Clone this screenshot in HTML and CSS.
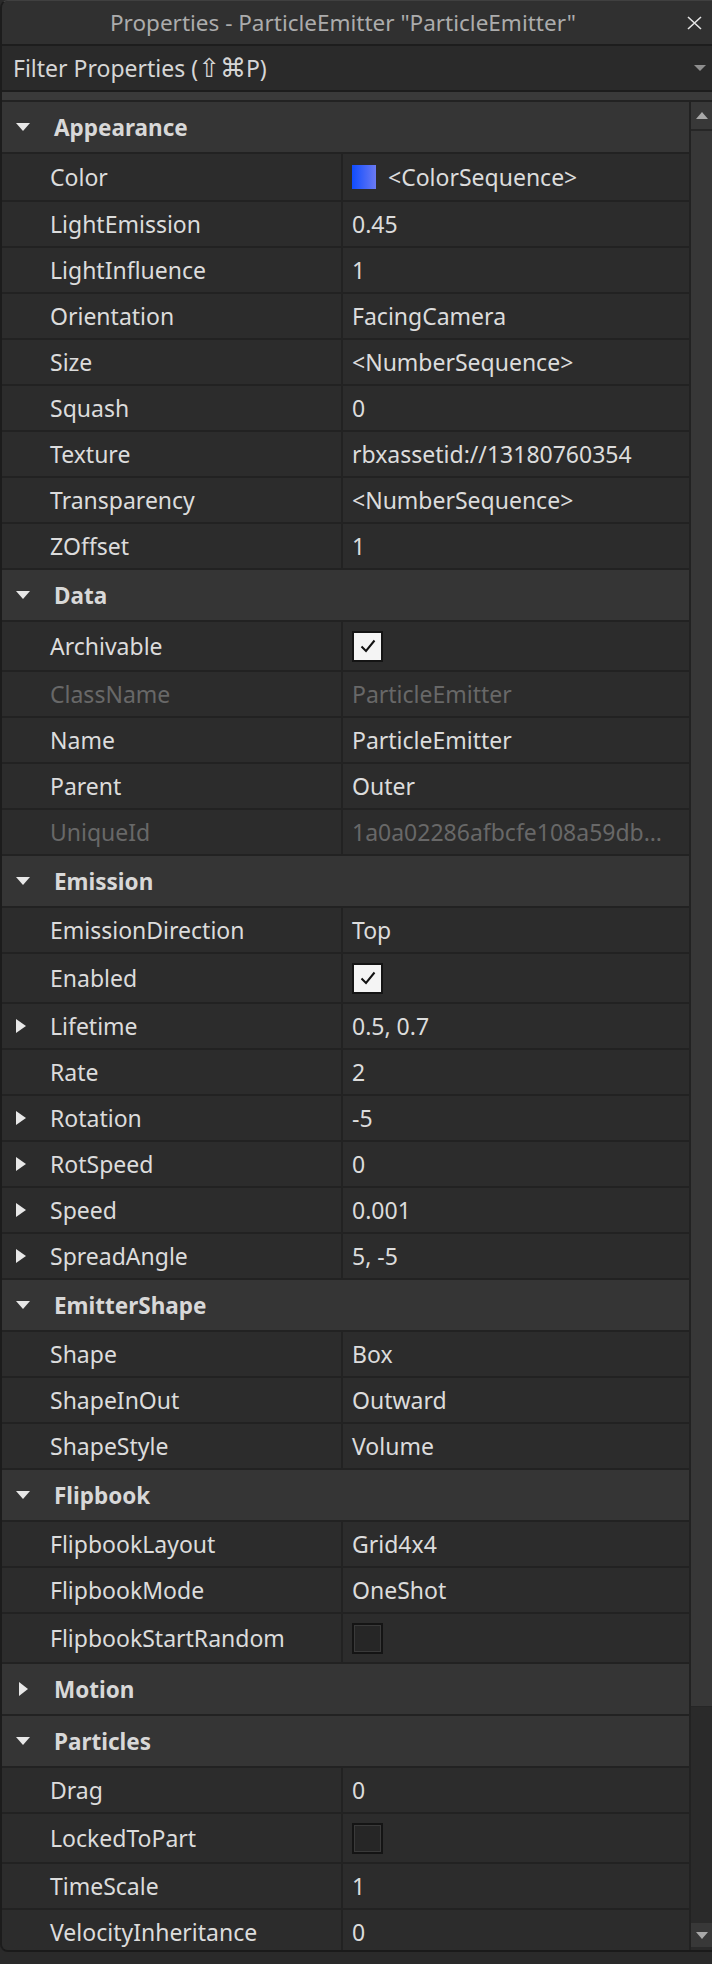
FILE: index.html
```html
<!DOCTYPE html>
<html lang="en">

<head>
  <meta charset="UTF-8">
  <meta name="viewport" content="width=device-width, initial-scale=1.0">
  <title>Properties</title>
  <link rel="stylesheet" href="styles.css">
</head>

<body>
  <div class="window">
    <div class="titlebar">
      <div class="title">Properties - ParticleEmitter "ParticleEmitter"</div>
      <svg class="close" width="15" height="14" viewBox="0 0 15 14">
        <path d="M1 1 L14 13 M14 1 L1 13" stroke="#e4e4e4" stroke-width="1.6" fill="none" />
      </svg>
    </div>

    <div class="filter">
      <span class="filter-text">Filter Properties (<span class="keys">⇧⌘</span>P)</span>
      <span class="caret"></span>
    </div>

    <div class="strip"></div>

    <div class="panel">
      <div class="list">
        <!-- Appearance -->
        <div class="row head"><span class="arrow down"></span><span>Appearance</span></div>
        <div class="row color-row">
          <div class="name">Color</div>
          <div class="value"><span class="swatch"></span>&lt;ColorSequence&gt;</div>
        </div>
        <div class="row"><div class="name">LightEmission</div><div class="value">0.45</div></div>
        <div class="row"><div class="name">LightInfluence</div><div class="value">1</div></div>
        <div class="row"><div class="name">Orientation</div><div class="value">FacingCamera</div></div>
        <div class="row"><div class="name">Size</div><div class="value">&lt;NumberSequence&gt;</div></div>
        <div class="row"><div class="name">Squash</div><div class="value">0</div></div>
        <div class="row"><div class="name">Texture</div><div class="value">rbxassetid://13180760354</div></div>
        <div class="row"><div class="name">Transparency</div><div class="value">&lt;NumberSequence&gt;</div></div>
        <div class="row"><div class="name">ZOffset</div><div class="value">1</div></div>

        <!-- Data -->
        <div class="row head"><span class="arrow down"></span><span>Data</span></div>
        <div class="row tall">
          <div class="name">Archivable</div>
          <div class="value"><span class="check on"><svg width="16" height="14" viewBox="0 0 16 14"><path d="M1.5 7.5 L6 12 L14.5 1.5" stroke="#111" stroke-width="2" fill="none" /></svg></span></div>
        </div>
        <div class="row dim"><div class="name">ClassName</div><div class="value">ParticleEmitter</div></div>
        <div class="row"><div class="name">Name</div><div class="value">ParticleEmitter</div></div>
        <div class="row"><div class="name">Parent</div><div class="value">Outer</div></div>
        <div class="row dim"><div class="name">UniqueId</div><div class="value">1a0a02286afbcfe108a59db…</div></div>

        <!-- Emission -->
        <div class="row head"><span class="arrow down"></span><span>Emission</span></div>
        <div class="row"><div class="name">EmissionDirection</div><div class="value">Top</div></div>
        <div class="row tall">
          <div class="name">Enabled</div>
          <div class="value"><span class="check on"><svg width="16" height="14" viewBox="0 0 16 14"><path d="M1.5 7.5 L6 12 L14.5 1.5" stroke="#111" stroke-width="2" fill="none" /></svg></span></div>
        </div>
        <div class="row"><div class="name"><span class="arrow right"></span>Lifetime</div><div class="value">0.5, 0.7</div></div>
        <div class="row"><div class="name">Rate</div><div class="value">2</div></div>
        <div class="row"><div class="name"><span class="arrow right"></span>Rotation</div><div class="value">-5</div></div>
        <div class="row"><div class="name"><span class="arrow right"></span>RotSpeed</div><div class="value">0</div></div>
        <div class="row"><div class="name"><span class="arrow right"></span>Speed</div><div class="value">0.001</div></div>
        <div class="row"><div class="name"><span class="arrow right"></span>SpreadAngle</div><div class="value">5, -5</div></div>

        <!-- EmitterShape -->
        <div class="row head"><span class="arrow down"></span><span>EmitterShape</span></div>
        <div class="row"><div class="name">Shape</div><div class="value">Box</div></div>
        <div class="row"><div class="name">ShapeInOut</div><div class="value">Outward</div></div>
        <div class="row"><div class="name">ShapeStyle</div><div class="value">Volume</div></div>

        <!-- Flipbook -->
        <div class="row head"><span class="arrow down"></span><span>Flipbook</span></div>
        <div class="row"><div class="name">FlipbookLayout</div><div class="value">Grid4x4</div></div>
        <div class="row"><div class="name">FlipbookMode</div><div class="value">OneShot</div></div>
        <div class="row tall">
          <div class="name">FlipbookStartRandom</div>
          <div class="value"><span class="check"></span></div>
        </div>

        <!-- Motion (collapsed) -->
        <div class="row head"><span class="arrow right"></span><span>Motion</span></div>

        <!-- Particles -->
        <div class="row head"><span class="arrow down"></span><span>Particles</span></div>
        <div class="row"><div class="name">Drag</div><div class="value">0</div></div>
        <div class="row tall">
          <div class="name">LockedToPart</div>
          <div class="value"><span class="check"></span></div>
        </div>
        <div class="row"><div class="name">TimeScale</div><div class="value">1</div></div>
        <div class="row"><div class="name">VelocityInheritance</div><div class="value">0</div></div>
      </div>

      <div class="scrollbar">
        <div class="sb-btn up"><span class="sb-arrow up"></span></div>
        <div class="sb-thumb"></div>
        <div class="sb-track"></div>
        <div class="sb-btn down"><span class="sb-arrow down"></span></div>
      </div>
    </div>
  </div>
</body>

</html>
```
FILE: styles.css
```css
* {
  padding: 0;
  margin: 0;
  box-sizing: border-box;
}

body {
  background: #2a2a2a;
  font-family: "Noto Sans", "DejaVu Sans", sans-serif;
  font-size: 23px;
  color: #dcdcdc;
  height: 1964px;
  overflow: hidden;
}

.window {
  width: 712px;
  border-top: 1px solid #404040;
  border-left: 2px solid #1c1c1c;
  border-bottom: 2px solid #1a1a1a;
  border-radius: 8px 0 0 8px;
  overflow: hidden;
  background: #2c2c2c;
}

/* title bar */
.titlebar {
  display: flex;
  align-items: center;
  height: 45px;
  background: #303030;
  border-bottom: 2px solid #1d1d1d;
}

.title {
  flex: 1;
  text-align: center;
  font-size: 22.5px;
  color: #acacac;
  white-space: nowrap;
}

.close {
  margin: 0 10px 0 3px;
}

/* filter */
.filter {
  display: flex;
  align-items: center;
  justify-content: space-between;
  height: 46px;
  padding: 0 6px 0 11px;
  background: #2a2a2a;
  border-bottom: 2px solid #1d1d1d;
}

.filter-text {
  color: #d6d6d6;
}

.keys {
  font-family: "DejaVu Sans", sans-serif;
  font-size: 26px;
  line-height: 1;
}

.caret {
  width: 0;
  height: 0;
  border-left: 6px solid transparent;
  border-right: 6px solid transparent;
  border-top: 6px solid #8e8e8e;
}

.strip {
  height: 10px;
  background: #3a3a3a;
  border-bottom: 2px solid #222;
}

/* list + scrollbar */
.panel {
  display: flex;
  height: 1848px;
  overflow: hidden;
}

.list {
  width: 687px;
}

.row {
  display: flex;
  height: 46px;
  background: #2c2c2c;
  border-bottom: 2px solid #222;
}

.row.color-row {
  height: 48px;
}

.row.tall {
  height: 50px;
}

.row.head {
  height: 52px;
  align-items: center;
  padding-left: 14px;
  background: #353535;
  font-weight: bold;
  font-size: 22.5px;
  color: #d8d8d8;
}

.name {
  display: flex;
  align-items: center;
  width: 341px;
  padding-left: 48px;
  border-right: 2px solid #222;
  white-space: nowrap;
}

.value {
  flex: 1;
  display: flex;
  align-items: center;
  padding-left: 9px;
  white-space: nowrap;
  overflow: hidden;
}

.row.dim {
  color: #686868;
}

/* triangles */
.arrow {
  width: 0;
  height: 0;
}

.arrow.down {
  border-left: 7px solid transparent;
  border-right: 7px solid transparent;
  border-top: 8px solid #e8e8e8;
  margin-right: 24px;
}

.arrow.right {
  border-top: 7px solid transparent;
  border-bottom: 7px solid transparent;
  border-left: 10px solid #e8e8e8;
}

.name .arrow.right {
  margin-left: -34px;
  margin-right: 24px;
}

.head .arrow.right {
  border-left-width: 9px;
  margin-left: 3px;
  margin-right: 26px;
}

.swatch {
  width: 24px;
  height: 24px;
  margin-right: 12px;
  background: linear-gradient(90deg, #0f4cff, #6b7af2);
}

.check {
  display: flex;
  align-items: center;
  justify-content: center;
  width: 31px;
  height: 31px;
  border: 2px solid #141414;
  background: #262626;
  box-shadow: inset 0 0 0 1px #3a3a3a;
}

.check.on {
  background: #f4f4f4;
  box-shadow: none;
}

.scrollbar {
  display: flex;
  flex-direction: column;
  width: 23px;
  border-left: 2px solid #222;
  background: #2a2a2a;
  padding-bottom: 3px;
}

.sb-btn {
  display: flex;
  align-items: center;
  justify-content: center;
  background: #383838;
}

.sb-btn.up {
  height: 29px;
  border-bottom: 2px solid #262626;
}

.sb-btn.down {
  height: 24px;
}

.sb-thumb {
  height: 1576px;
  background: #373737;
  border-bottom: 1px solid #262626;
}

.sb-track {
  flex: 1;
}

.sb-arrow {
  width: 0;
  height: 0;
  border-left: 6px solid transparent;
  border-right: 6px solid transparent;
}

.sb-arrow.up {
  border-bottom: 7px solid #a8a8a8;
}

.sb-arrow.down {
  border-top: 7px solid #a8a8a8;
}
```
